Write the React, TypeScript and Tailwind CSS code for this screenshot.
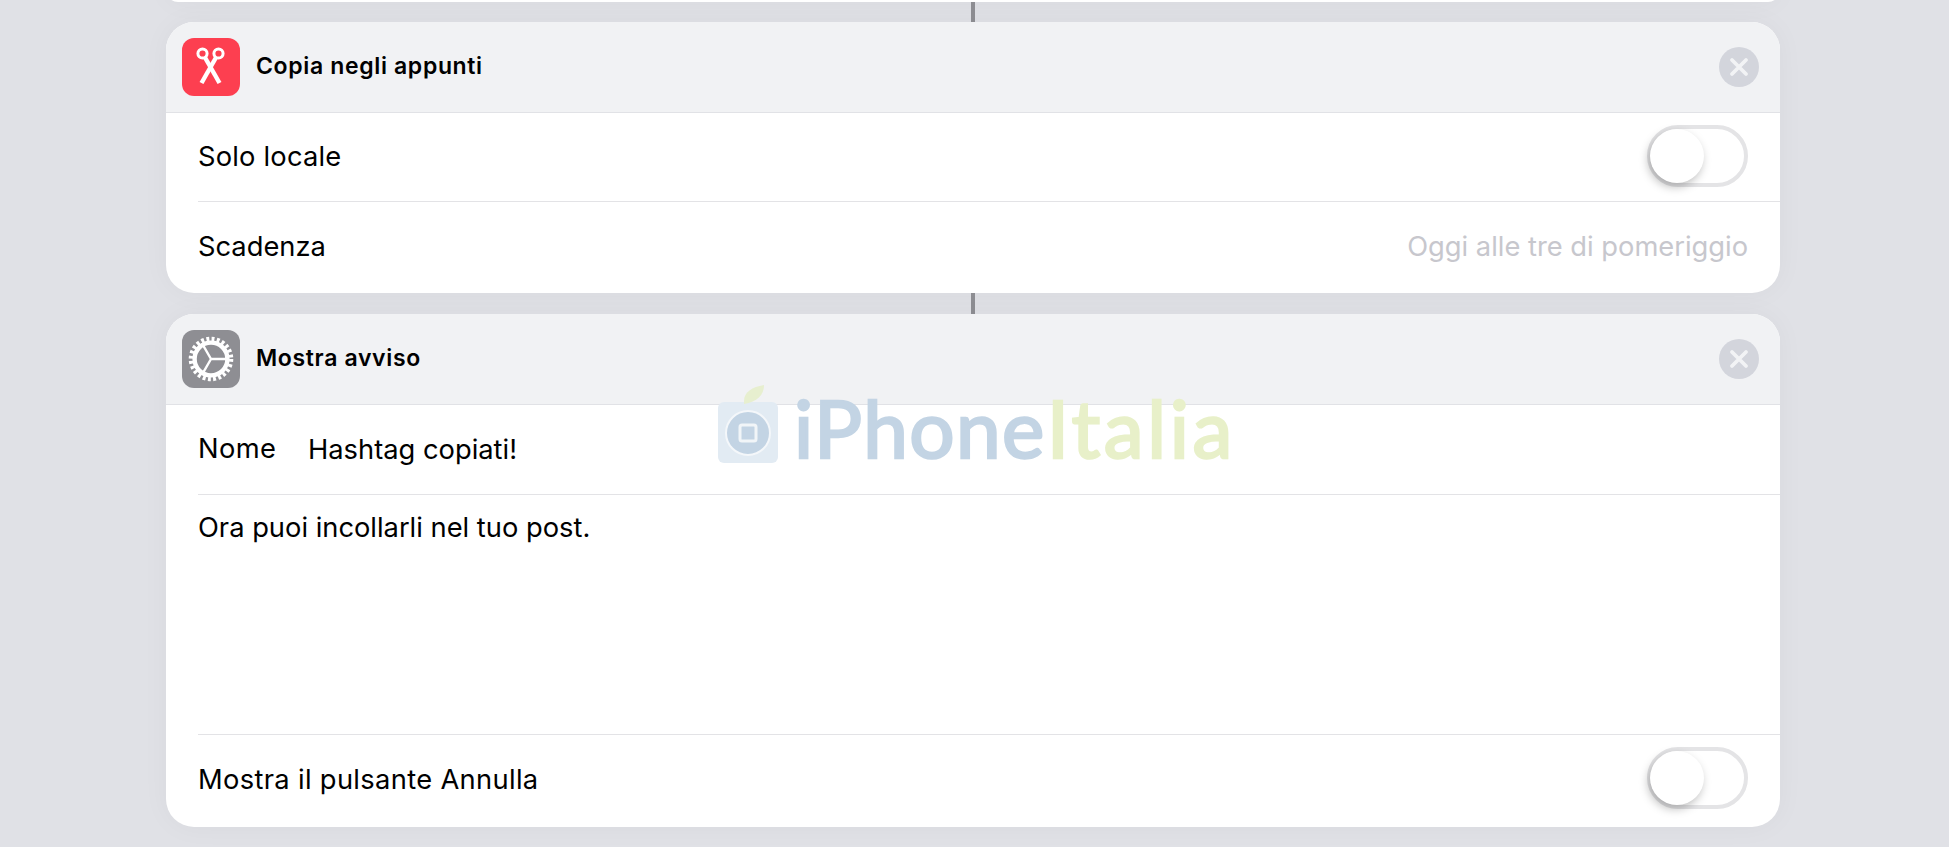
import React from "react";

function Toggle() {
  return (
    <div className="relative h-[62px] w-[101px] rounded-full border-[4px] border-[#e4e4e6] bg-white">
      <div className="absolute -left-[1px] top-0 h-[54px] w-[54px] rounded-full bg-white shadow-[-2px_4px_10px_rgba(0,0,0,0.26)]" />
    </div>
  );
}

function CloseButton() {
  return (
    <div className="flex h-[40px] w-[40px] items-center justify-center rounded-full bg-[#d3d5dc]">
      <svg width="20" height="20" viewBox="0 0 20 20" fill="none" stroke="#f2f3f5" strokeWidth="3.8" strokeLinecap="round">
        <path d="M3 3 L17 17 M17 3 L3 17" />
      </svg>
    </div>
  );
}

function Scissors() {
  return (
    <div className="flex h-[58px] w-[58px] items-center justify-center rounded-[12px] bg-[#fd3f50]">
      <svg width="58" height="58" viewBox="0 0 58 58" fill="none" stroke="white" strokeLinecap="butt">
        <circle cx="20.5" cy="15.5" r="4.6" strokeWidth="3" />
        <circle cx="36.5" cy="15.5" r="4.6" strokeWidth="3" />
        <path d="M23 19.5 L37.5 45" strokeWidth="4.4" />
        <path d="M34 19.5 L19.5 45" strokeWidth="4.4" />
      </svg>
    </div>
  );
}

function Gear() {
  const r = 20;
  const period = (2 * Math.PI * r) / 24;
  return (
    <div className="flex h-[58px] w-[58px] items-center justify-center rounded-[12px] bg-[#8e8e93]">
      <svg width="58" height="58" viewBox="0 0 58 58" fill="none" stroke="white">
        <circle cx="29" cy="29" r="16.4" strokeWidth="4.4" />
        <circle cx="29" cy="29" r={r} strokeWidth="4.6" strokeDasharray={`${period * 0.55} ${period * 0.45}`} />
        <path d="M29 29 L47 29 M29 29 L20 13.4 M29 29 L20 44.6" strokeWidth="2.4" />
      </svg>
    </div>
  );
}

function Header({ icon, title }: { icon: React.ReactNode; title: string }) {
  return (
    <div className="flex h-[91px] items-center border-b border-[#e1e2e6] bg-[#f1f2f4] pl-[16px] pr-[21px]">
      {icon}
      <div className="-mt-[1px] ml-[16px] flex-1 text-[23px] font-semibold tracking-[0.65px] text-black">{title}</div>
      <div className="-mt-[1px]">
        <CloseButton />
      </div>
    </div>
  );
}

function Divider() {
  return <div className="ml-[32px] h-px bg-[#e3e3e6]" />;
}

export default function App() {
  return (
    <div
      className="relative h-[847px] overflow-hidden bg-[#e0e1e6] pl-[166px] pr-[169px] text-black"
      style={{ fontFamily: "Inter, 'Liberation Sans', sans-serif" }}
    >
      <div className="-mt-[22px] h-[24px] rounded-[32px] bg-white shadow-[0_0_28px_rgba(0,0,0,0.04)]" />
      <div className="mx-auto h-[20px] w-[4px] bg-[#8e8e93]" />
      <div className="h-[271px] overflow-hidden rounded-[28px] bg-white text-[27.3px] shadow-[0_0_28px_rgba(0,0,0,0.04)]">
        <Header icon={<Scissors />} title="Copia negli appunti" />
        <div className="flex h-[88px] items-center justify-between pl-[32px] pr-[32px]">
          <span className="tracking-[0.2px]">Solo locale</span>
          <div className="-mt-[2px]">
            <Toggle />
          </div>
        </div>
        <Divider />
        <div className="flex h-[91px] items-center justify-between pl-[32px] pr-[32px]">
          <span>Scadenza</span>
          <span className="text-[#c7c7cd]">Oggi alle tre di pomeriggio</span>
        </div>
      </div>
      <div className="mx-auto h-[21px] w-[4px] bg-[#8e8e93]" />
      <div className="h-[513px] overflow-hidden rounded-[28px] bg-white text-[27.3px] shadow-[0_0_28px_rgba(0,0,0,0.04)]">
        <Header icon={<Gear />} title="Mostra avviso" />
        <div className="flex h-[89px] items-center pl-[32px]">
          <span className="-mt-[1px] w-[110px] tracking-[0.4px]">Nome</span>
          <span className="mt-[1px]">Hashtag copiati!</span>
        </div>
        <Divider />
        <div className="h-[239px] pl-[32px] pt-[13px]">Ora puoi incollarli nel tuo post.</div>
        <Divider />
        <div className="flex h-[92px] items-center justify-between pl-[32px] pr-[32px]">
          <span className="-mt-[2px] tracking-[0.33px]">Mostra il pulsante Annulla</span>
          <div className="-mt-[7px]">
            <Toggle />
          </div>
        </div>
      </div>

      <div className="pointer-events-none absolute left-[717px] top-[385px] flex h-[80px] items-center">
        <svg width="64" height="80" viewBox="0 0 64 80" className="mr-[13px]">
          <rect x="1" y="17" width="60" height="61" rx="6" fill="#e2ebf3" />
          <path d="M27 16 C27 7 35 2 47 0 C47 10 40 17 27 19 Z" fill="#e7efcf" />
          <circle cx="31" cy="48" r="22" fill="#c3d4e4" stroke="#f4f7fa" strokeWidth="2" />
          <rect x="23" y="40" width="16" height="16" rx="2" fill="none" stroke="#f1f5f8" strokeWidth="3" />
        </svg>
        <span
          className="mt-[3px] text-[80px] font-normal leading-none tracking-[1.4px] text-[#c3d4e4] [-webkit-text-stroke:2.5px_#c3d4e4]"
          style={{ fontFamily: "Lato, sans-serif" }}
        >
          iPhone
        </span>
        <span
          className="ml-[1px] mt-[3px] text-[80px] font-normal leading-none tracking-[3.6px] text-[#e8f0c9] [-webkit-text-stroke:2.5px_#e8f0c9]"
          style={{ fontFamily: "Lato, sans-serif" }}
        >
          Italia
        </span>
      </div>
    </div>
  );
}
